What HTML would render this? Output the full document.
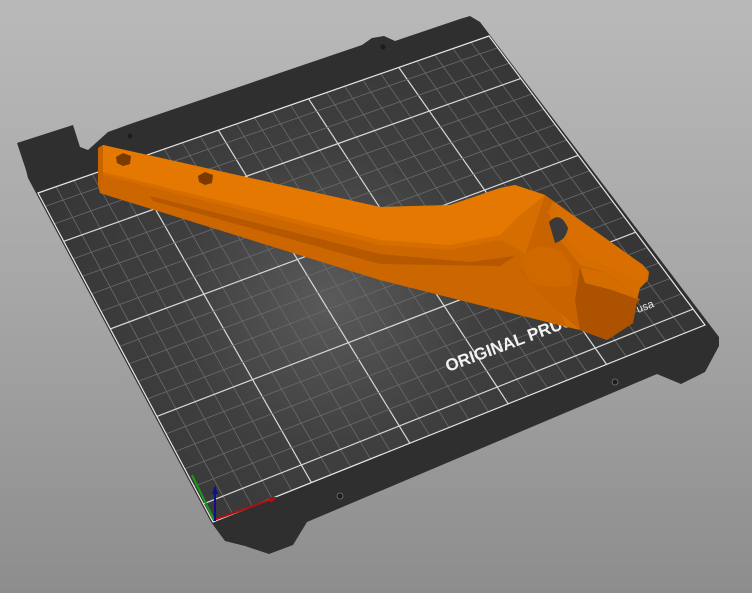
<!DOCTYPE html>
<html><head><meta charset="utf-8">
<style>
html,body{margin:0;padding:0;width:752px;height:593px;overflow:hidden;background:linear-gradient(#b9b9b9,#a6a6a6 50%,#8d8d8d);}
svg{position:absolute;left:0;top:0}
</style></head>
<body>
<svg id="s" width="752" height="593" viewBox="0 0 752 593" xmlns="http://www.w3.org/2000/svg">
<defs>
<radialGradient id="rg" cx="330" cy="300" r="300" gradientUnits="userSpaceOnUse">
<stop offset="0" stop-color="#5a5a5a"/><stop offset="0.5" stop-color="#3f3f3f"/><stop offset="1" stop-color="#363636"/>
</radialGradient>
</defs>
<path d="M17,143 L73,125 L80,147 L88,150 L108,132 L133,123 L362,45 L372,38 L384,36 L395,41 L460,19 L470,16 L480,22 L719,337 L719,346 L705,372 L681,384 L657,374 L307,522 L293,545 L269,554 L245,546 L225,541 L211,522 L28,178 L26,170 Z" fill="#2f2f2f"/>
<polygon points="38,193 489,36 705,325 213,522" fill="url(#rg)"/>
<g id="grid"></g>
<polygon points="38,193 489,36 705,325 213,522" fill="none" stroke="#e6e6e6" stroke-width="1.2"/>
<circle cx="383" cy="47" r="2.5" fill="#1c1c1c"/>
<circle cx="130" cy="136" r="2.5" fill="#1c1c1c"/>
<circle cx="340" cy="496" r="3" fill="#1c1c1c" stroke="#777" stroke-width="0.8"/>
<circle cx="615" cy="382" r="3" fill="#1c1c1c" stroke="#777" stroke-width="0.8"/>
<text x="0" y="0" transform="translate(448,372) rotate(-20.5)" font-family="Liberation Sans, sans-serif" font-size="17" font-weight="bold" fill="#f2f2f2">ORIGINAL PRUSA</text>
<text x="0" y="0" transform="translate(638,313) rotate(-20.5)" font-family="Liberation Sans, sans-serif" font-size="11" fill="#e8e8e8">usa</text>
<line x1="214" y1="520" x2="275" y2="498" stroke="#b01010" stroke-width="2"/>
<polygon points="277,497 268,497 271,503" fill="#b01010"/>
<line x1="214" y1="520" x2="192" y2="475" stroke="#1a9a1a" stroke-width="2"/>
<line x1="215" y1="521" x2="215" y2="490" stroke="#10108a" stroke-width="2"/>
<polygon points="215,485 212,494 218,494" fill="#10108a"/>
<!-- orange part -->
<path d="M98,148 L103,145 L380,207 L450,205 L500,188 L515,185 L545,195 L643,265 L649,272 L648,280 L640,288 L637,300 L633,323 L607,340 L580,330 L567,327 L380,280 L100,193 L98,185 Z" fill="#d56d00"/>
<path d="M98,148 L103,145 L103,188 L100,193 L98,185 Z" fill="#c86400"/>
<path d="M103,175 L380,245 L450,250 L500,240 L520,250 L540,270 L567,327 L380,280 L100,193 Z" fill="#cc6600"/>
<path d="M150,196 L380,254 L470,262 L515,256 L500,266 L380,264 L153,201 Z" fill="#b55800"/>
<path d="M103,145 L380,207 L450,205 L500,188 L515,185 L545,195 L520,215 L500,235 L450,245 L380,240 L103,172 Z" fill="#e47800"/>
<!-- head -->
<path d="M545,195 L553,202 L548,212 L560,240 L580,265 L607,273 L640,300 L637,300 L633,323 L607,340 L580,330 L545,300 L520,270 Z" fill="#c86300"/>
<path d="M553,202 L643,265 L649,272 L640,283 L610,268 L585,258 L568,240 L560,225 Z" fill="#d96f00"/>
<path d="M549,222 Q560,210 568,228 Q566,240 555,243 Z" fill="#3a3a3a"/>
<path d="M520,262 Q530,240 560,250 Q575,265 572,285 Q550,290 530,282 Z" fill="#d06800"/>
<path d="M580,267 L607,273 L640,300 L637,302 L633,323 L607,340 L580,330 L575,300 Z" fill="#ad5200"/>
<path d="M580,267 L607,273 L640,300 L612,290 L585,283 Z" fill="#d46c00"/>
<path d="M116,157 L123,153 L131,156 L130,164 L123,166 L117,163 Z" fill="#7a3a00"/>
<path d="M198,176 L205,172 L213,175 L212,183 L205,185 L199,182 Z" fill="#7a3a00"/>
</svg>
<script>
(function(){
var g=document.getElementById('grid'),NS='http://www.w3.org/2000/svg';
var BL=[213,522],BR=[705,325],TR=[489,36],TL=[38,193];
function P(u,v){var b=[BL[0]+(BR[0]-BL[0])*u,BL[1]+(BR[1]-BL[1])*u],t=[TL[0]+(TR[0]-TL[0])*u,TL[1]+(TR[1]-TL[1])*u];return[b[0]+(t[0]-b[0])*v,b[1]+(t[1]-b[1])*v];}
function L(a,b,c,w){var l=document.createElementNS(NS,'line');l.setAttribute('x1',a[0]);l.setAttribute('y1',a[1]);l.setAttribute('x2',b[0]);l.setAttribute('y2',b[1]);l.setAttribute('stroke',c);l.setAttribute('stroke-width',w);g.appendChild(l);}
for(var i=1;i<25;i++){var u=i*0.04;var maj=i%5==0;L(P(u,0),P(u,1),maj?'#d8d8d8':'#6a6a6a',maj?1.2:0.8);}
for(var v=0.055-0.0532,k=0;v<1;v+=0.0532,k++){if(v<=0.005)continue;var maj=(k%5==1);L(P(0,v),P(1,v),maj?'#d8d8d8':'#6a6a6a',maj?1.2:0.8);}
})();
</script>
</body></html>
